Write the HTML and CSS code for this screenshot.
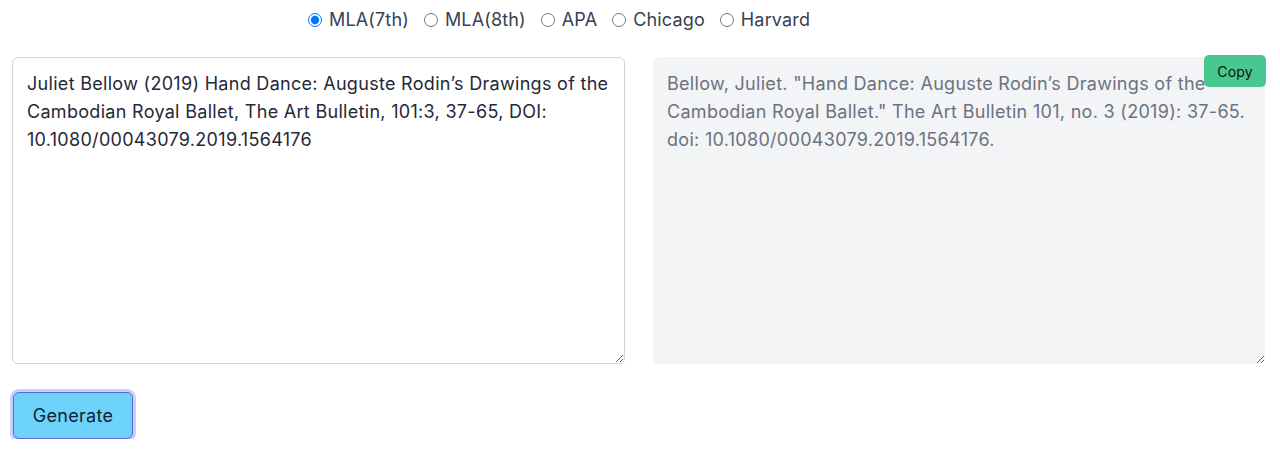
FILE: index.html
```html
<!DOCTYPE html>
<html>
<head>
<meta charset="utf-8">
<link rel="stylesheet" href="styles.css">
</head>
<body>
<div class="page">
  <div class="styles">
    <label class="opt"><input type="radio" name="style" checked><span>MLA(7th)</span></label>
    <label class="opt"><input type="radio" name="style"><span>MLA(8th)</span></label>
    <label class="opt"><input type="radio" name="style"><span>APA</span></label>
    <label class="opt"><input type="radio" name="style"><span>Chicago</span></label>
    <label class="opt"><input type="radio" name="style"><span>Harvard</span></label>
  </div>
  <div class="panes">
    <textarea class="input">Juliet Bellow (2019) Hand Dance: Auguste Rodin’s Drawings of the Cambodian Royal Ballet, The Art Bulletin, 101:3, 37-65, DOI: 10.1080/00043079.2019.1564176</textarea>
    <div class="output-wrap">
      <textarea class="output" readonly>Bellow, Juliet. "Hand Dance: Auguste Rodin’s Drawings of the Cambodian Royal Ballet." The Art Bulletin 101, no. 3 (2019): 37-65. doi: 10.1080/00043079.2019.1564176.</textarea>
      <button class="copy">Copy</button>
    </div>
  </div>
  <div class="actions">
    <button class="generate">Generate</button>
  </div>
</div>
</body>
</html>
```

FILE: styles.css
```css
* { box-sizing: border-box; }
html, body { margin: 0; padding: 0; background: #ffffff; }
body { font-family: Inter, "Noto Sans", "Liberation Sans", sans-serif; color: #111827; }
.page { padding: 0 15px 0 12px; }
.styles {
  display: flex;
  align-items: center;
  height: 39px;
  padding-left: 296px;
  gap: 15px;
}
.opt {
  display: inline-flex;
  align-items: center;
  gap: 7px;
  font-size: 18px;
  line-height: 28px;
  letter-spacing: 0.15px;
  color: #374151;
}
.opt input {
  margin: 0;
  width: 14px;
  height: 14px;
  accent-color: #0075ff;
}
.panes {
  display: grid;
  grid-template-columns: 613px 612px;
  gap: 28px;
  margin-top: 18px;
}
textarea {
  font-family: Inter, "Noto Sans", "Liberation Sans", sans-serif;
  font-size: 18px;
  line-height: 28px;
  letter-spacing: 0.3px;
  height: 307px;
  width: 100%;
  padding: 13px 14px;
  border-radius: 6px;
  resize: vertical;
  outline: none;
  display: block;
}
.input {
  border: 1px solid #d4d4d8;
  color: #1f2937;
  background: #ffffff;
  padding: 12px 14px;
}
.output-wrap { position: relative; }
.output {
  border: none;
  background: #f3f4f6;
  color: #6b7280;
}
.copy {
  position: absolute;
  top: -2px;
  right: -1px;
  width: 62px;
  height: 32px;
  border: none;
  border-radius: 5px;
  background: #48c78e;
  color: #111111;
  font-family: Inter, "Noto Sans", "Liberation Sans", sans-serif;
  font-size: 14px;
  letter-spacing: 0.2px;
  padding: 0;
}
.actions { margin-top: 28px; }
.generate {
  width: 120px;
  height: 47px;
  margin-left: 1px;
  border: 1px solid #5a67d8;
  border-radius: 6px;
  background: #6dd3fb;
  color: #0f2333;
  font-family: Inter, "Noto Sans", "Liberation Sans", sans-serif;
  font-size: 18px;
  letter-spacing: 0.3px;
  box-shadow: 0 0 0 3px #c9cefc;
  padding: 0;
}
```
